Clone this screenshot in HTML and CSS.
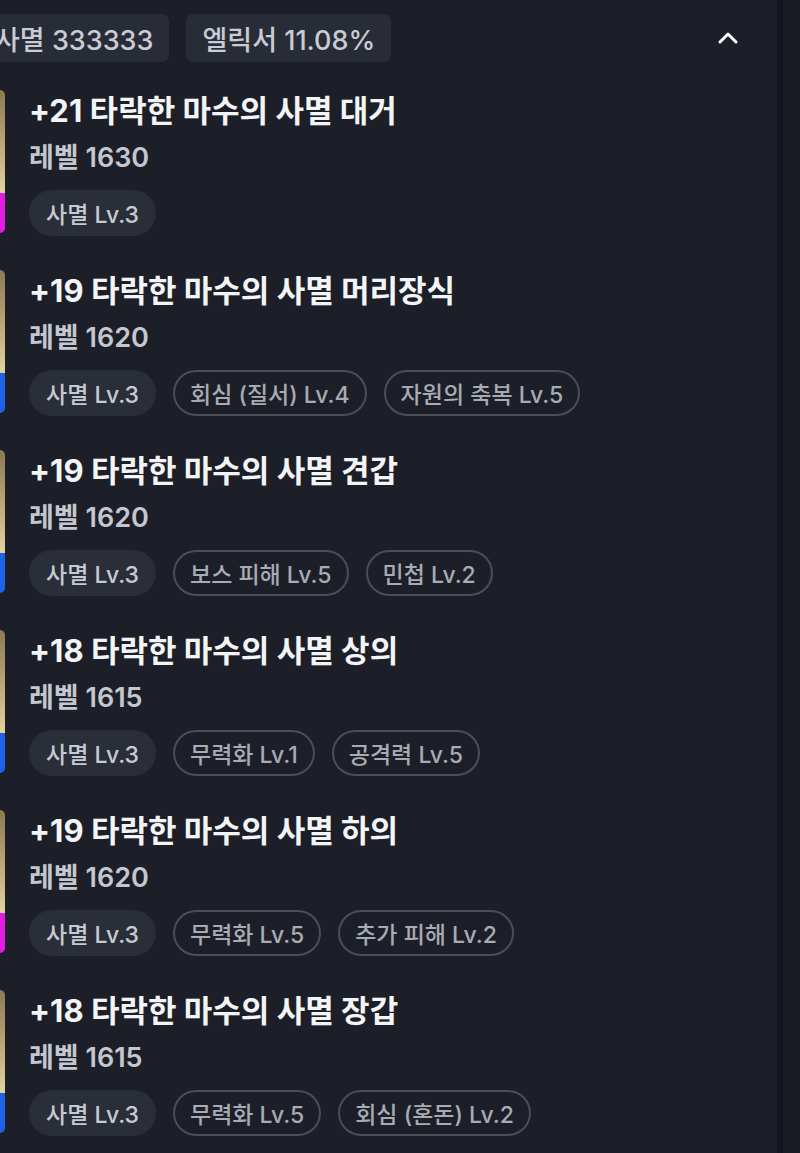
FILE: index.html
```html
<!DOCTYPE html>
<html lang="ko">
<head>
<meta charset="utf-8">
<link rel="stylesheet" href="styles.css">
</head>
<body>
<div class="app">
  <main class="main">
    <header class="summary">
      <div class="stat stat-first">사멸 333333</div>
      <div class="stat">엘릭서 11.08%</div>
      <button class="toggle" aria-label="접기">
        <svg width="22" height="14" viewBox="0 0 22 14"><polyline points="3,11 11,3 19,11" fill="none" stroke="#ffffff" stroke-width="3" stroke-linecap="round" stroke-linejoin="round"/></svg>
      </button>
    </header>
    <section class="list">
      <article class="item">
        <div class="thumb thumb-magenta"></div>
        <div class="info">
          <div class="title">+21 타락한 마수의 사멸 대거</div>
          <div class="level">레벨 1630</div>
          <div class="tags"><span class="tag tag-main">사멸 Lv.3</span></div>
        </div>
      </article>
      <article class="item">
        <div class="thumb thumb-blue"></div>
        <div class="info">
          <div class="title">+19 타락한 마수의 사멸 머리장식</div>
          <div class="level">레벨 1620</div>
          <div class="tags"><span class="tag tag-main">사멸 Lv.3</span><span class="tag">회심 (질서) Lv.4</span><span class="tag">자원의 축복 Lv.5</span></div>
        </div>
      </article>
      <article class="item">
        <div class="thumb thumb-blue"></div>
        <div class="info">
          <div class="title">+19 타락한 마수의 사멸 견갑</div>
          <div class="level">레벨 1620</div>
          <div class="tags"><span class="tag tag-main">사멸 Lv.3</span><span class="tag">보스 피해 Lv.5</span><span class="tag">민첩 Lv.2</span></div>
        </div>
      </article>
      <article class="item">
        <div class="thumb thumb-blue"></div>
        <div class="info">
          <div class="title">+18 타락한 마수의 사멸 상의</div>
          <div class="level">레벨 1615</div>
          <div class="tags"><span class="tag tag-main">사멸 Lv.3</span><span class="tag">무력화 Lv.1</span><span class="tag">공격력 Lv.5</span></div>
        </div>
      </article>
      <article class="item">
        <div class="thumb thumb-magenta"></div>
        <div class="info">
          <div class="title">+19 타락한 마수의 사멸 하의</div>
          <div class="level">레벨 1620</div>
          <div class="tags"><span class="tag tag-main">사멸 Lv.3</span><span class="tag">무력화 Lv.5</span><span class="tag">추가 피해 Lv.2</span></div>
        </div>
      </article>
      <article class="item">
        <div class="thumb thumb-blue"></div>
        <div class="info">
          <div class="title">+18 타락한 마수의 사멸 장갑</div>
          <div class="level">레벨 1615</div>
          <div class="tags"><span class="tag tag-main">사멸 Lv.3</span><span class="tag">무력화 Lv.5</span><span class="tag">회심 (혼돈) Lv.2</span></div>
        </div>
      </article>
    </section>
  </main>
  <aside class="gutter"></aside>
</div>
</body>
</html>
```

FILE: styles.css
```css
* { box-sizing: border-box; }
html, body {
  margin: 0;
  padding: 0;
  width: 800px;
  height: 1153px;
  overflow: hidden;
  background: #1c1f27;
  font-family: "Inter", "Noto Sans CJK KR", sans-serif;
}
.app {
  display: flex;
  width: 800px;
  height: 1153px;
}
.main {
  width: 777px;
  flex: none;
  padding-top: 14px;
  overflow: hidden;
}
.gutter {
  flex: 1;
  background: #171a1f;
  border-left: 6px solid #12151d;
}
.summary {
  display: flex;
  align-items: center;
  gap: 17px;
  height: 48px;
  margin-left: -21px;
}
.stat {
  height: 48px;
  display: flex;
  align-items: center;
  padding: 0 16px;
  border-radius: 7px;
  background: #282c36;
  color: #c9ccd4;
  font-size: 27px;
  font-weight: 500;
  white-space: nowrap;
}
.toggle {
  margin-left: auto;
  margin-right: 38px;
  width: 22px;
  height: 14px;
  padding: 0;
  border: 0;
  background: none;
  display: flex;
}
.list {
  margin-top: 28px;
  display: flex;
  flex-direction: column;
  gap: 35px;
}
.item {
  display: flex;
  gap: 24px;
  height: 145px;
}
.thumb {
  width: 5px;
  height: 143px;
  border-radius: 0 5px 5px 0;
  flex: none;
}
.thumb-magenta {
  background: linear-gradient(to bottom, #8c7955 0%, #b9a373 35%, #e4d39f 72%, #e01de4 72%, #e01de4 100%);
}
.thumb-blue {
  background: linear-gradient(to bottom, #8c7955 0%, #b9a373 35%, #e4d39f 72%, #1d62e8 72%, #1d62e8 100%);
}
.info {
  display: flex;
  flex-direction: column;
}
.title {
  margin-top: 3px;
  height: 36px;
  line-height: 36px;
  font-size: 31px;
  font-weight: 700;
  color: #f3f4f6;
  white-space: nowrap;
}
.level {
  margin-top: 11px;
  height: 36px;
  line-height: 36px;
  font-size: 27px;
  font-weight: 600;
  color: #c4c7cf;
}
.tags {
  margin-top: 14px;
  display: flex;
  gap: 17px;
}
.tag {
  height: 46px;
  display: flex;
  align-items: center;
  padding: 0 15px;
  border-radius: 23px;
  border: 2px solid #4a4e57;
  color: #a7abb3;
  font-size: 23px;
  font-weight: 500;
  white-space: nowrap;
}
.tag-main {
  background: #2a2e38;
  border-color: #2a2e38;
  color: #c7cad2;
}
```
